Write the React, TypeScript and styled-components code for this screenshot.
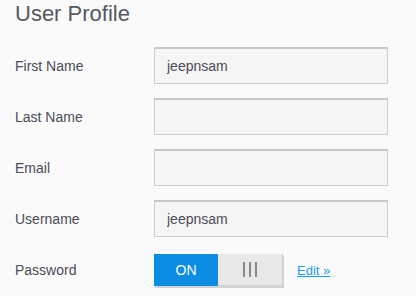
import React from 'react';
import styled, { createGlobalStyle } from 'styled-components';

const GlobalStyle = createGlobalStyle`
  html, body {
    margin: 0;
    padding: 0;
    background: #fafafa;
  }
  body {
    font-family: "Liberation Sans", Arial, sans-serif;
    color: #4a4d55;
  }
`;

const Page = styled.div`
  width: 416px;
  height: 296px;
  padding: 0 15px;
  box-sizing: border-box;
  overflow: hidden;
`;

const Title = styled.h1`
  margin: 0;
  padding-top: 1px;
  height: 47px;
  box-sizing: border-box;
  font-size: 22px;
  font-weight: normal;
  line-height: 26px;
  color: #555960;
`;

const Form = styled.div`
  display: grid;
  grid-template-columns: 139px 234px;
  grid-auto-rows: 37px;
  row-gap: 14px;
  align-items: center;
`;

const Label = styled.label`
  font-size: 14px;
  color: #4a4d58;
`;

const Input = styled.input`
  box-sizing: border-box;
  width: 234px;
  height: 37px;
  padding: 0 12px;
  border: 1px solid #cccccc;
  border-top: 2px solid #c8c8c8;
  background: #f5f5f5;
  font-family: "Liberation Sans", Arial, sans-serif;
  font-size: 14px;
  color: #4a4d58;
  outline: none;
`;

const PasswordRow = styled.div`
  display: flex;
  align-items: center;
  gap: 14px;
`;

const Toggle = styled.div`
  display: flex;
  height: 32px;
  box-shadow: 1px 2px 0 #d2d2d2;
`;

const ToggleOn = styled.div`
  width: 64px;
  background: #0b8de3;
  color: #ffffff;
  font-size: 14px;
  display: flex;
  align-items: center;
  justify-content: center;
`;

const Handle = styled.div`
  width: 64px;
  background: #e8e8e8;
  border-right: 1px solid #d0d0d0;
  border-bottom: 1px solid #d0d0d0;
  display: flex;
  align-items: center;
  justify-content: center;
  gap: 4px;
`;

const Grip = styled.span`
  width: 2px;
  height: 15px;
  background: #8a8a8a;
`;

const EditLink = styled.a`
  font-size: 13px;
  color: #1b9af0;
  text-decoration: underline;
  margin-top: 2px;
`;

export default function App() {
  return (
    <>
      <GlobalStyle />
      <Page>
        <Title>User Profile</Title>
        <Form>
          <Label>First Name</Label>
          <Input defaultValue="jeepnsam" />
          <Label>Last Name</Label>
          <Input />
          <Label>Email</Label>
          <Input />
          <Label>Username</Label>
          <Input defaultValue="jeepnsam" />
          <Label>Password</Label>
          <PasswordRow>
            <Toggle>
              <ToggleOn>ON</ToggleOn>
              <Handle>
                <Grip />
                <Grip />
                <Grip />
              </Handle>
            </Toggle>
            <EditLink href="#">Edit »</EditLink>
          </PasswordRow>
        </Form>
      </Page>
    </>
  );
}
